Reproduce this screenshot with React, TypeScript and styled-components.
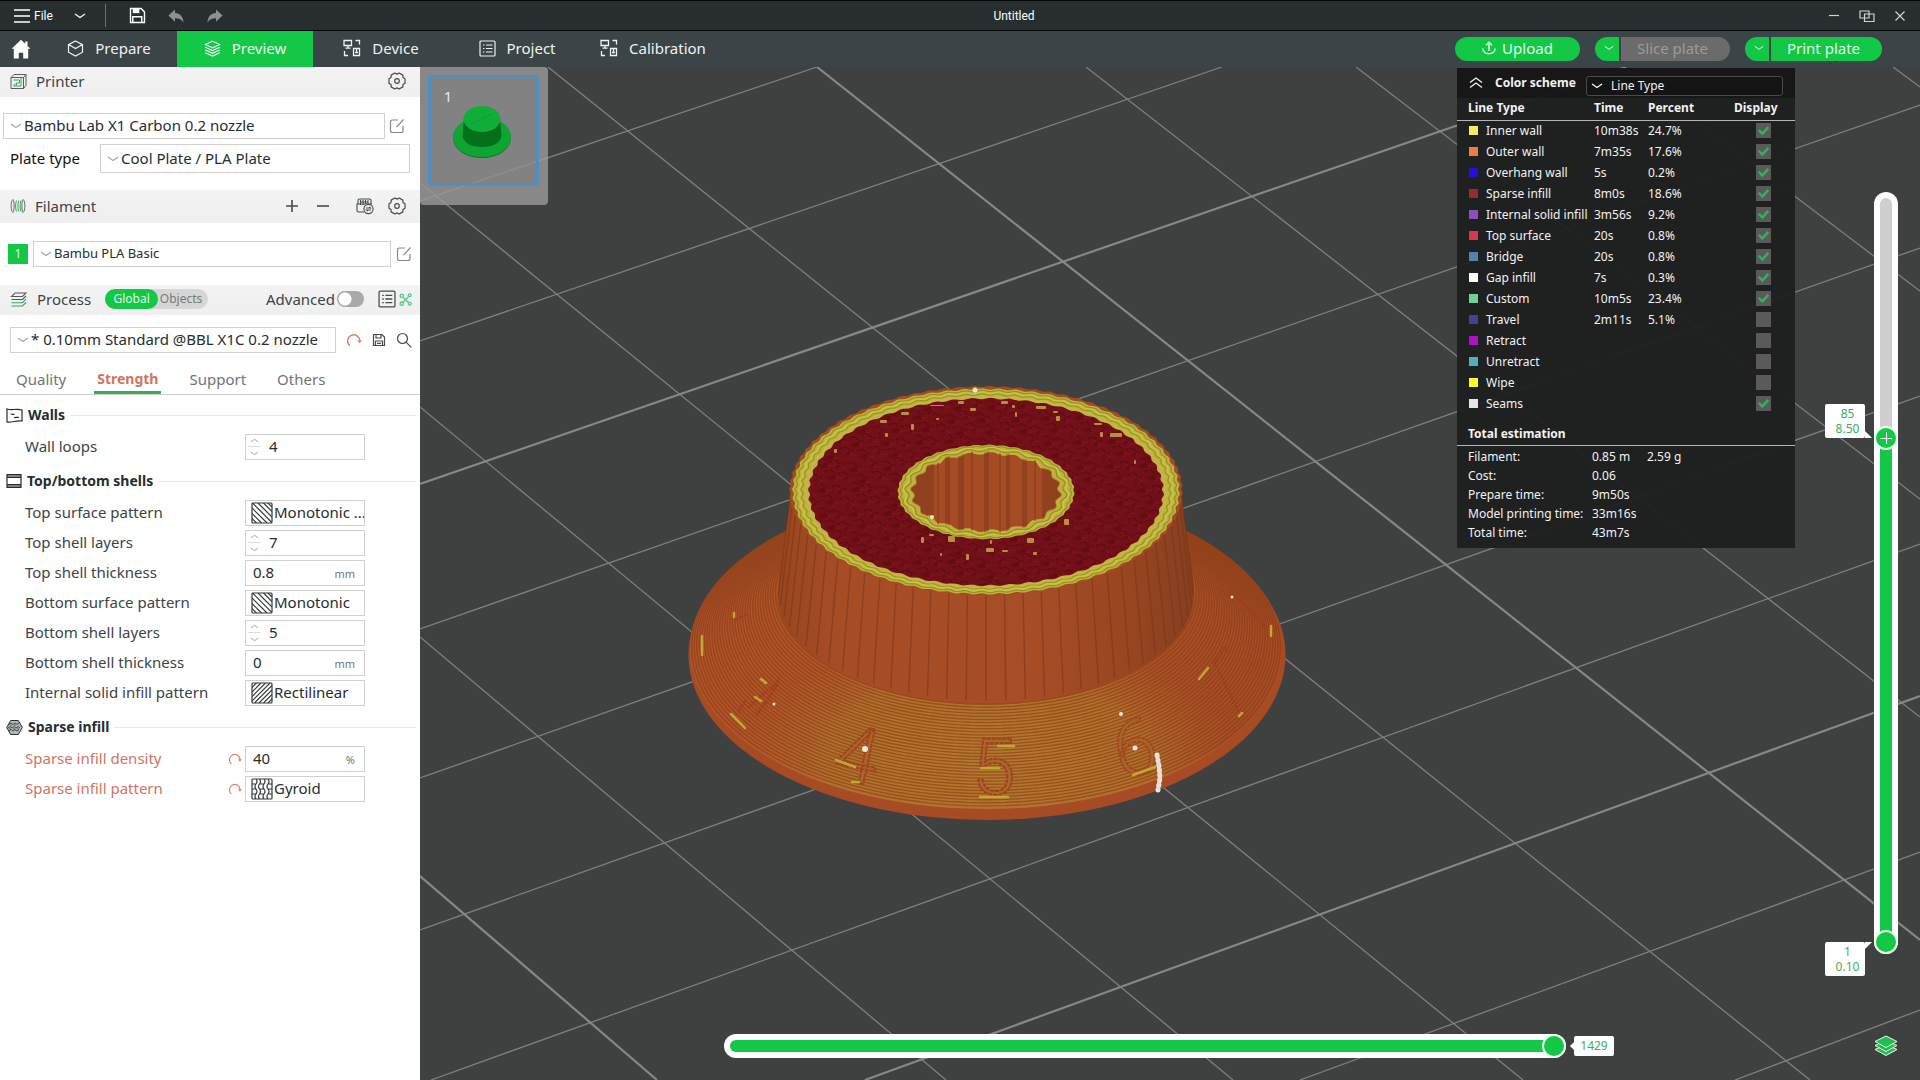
import React, { useId, useState } from "react";
import styled, { createGlobalStyle, css } from "styled-components";

const GREEN = "#12c846";
const INK = "#262e30";
const MODIFIED = "#cf7560";
const BORDER = "#d0d0d0";

const GlobalStyle = createGlobalStyle`
  *, *::before, *::after { box-sizing: border-box; }
  body { margin: 0; background: #3f4140; }
  body, button, input, select { font-family: "Noto Sans", "Open Sans", sans-serif; }
  button { border: 0; padding: 0; background: none; color: inherit; cursor: pointer; }
`;

/* ---------- icons ---------- */

const Svg = styled.svg.attrs<{ $s?: number }>((p) => ({
  fill: p.fill ?? "none",
  stroke: p.stroke ?? "currentColor",
  strokeWidth: p.strokeWidth ?? 1.2,
}))<{ $s?: number }>`
  width: ${(p) => p.$s ?? 16}px;
  height: ${(p) => p.$s ?? 16}px;
  flex: none;
  display: block;
`;

type IconProps = { s?: number };

const Chevron = ({ s = 12 }: IconProps) => (
  <Svg $s={s} viewBox="0 0 12 12"><path d="M1 4l5 3.600L11 4" /></Svg>
);
const MenuIcon = () => (
  <Svg $s={16} viewBox="0 0 16 16" strokeWidth="1.600"><path d="M0 2h16M0 8h16M0 14h16" /></Svg>
);
const SaveWhite = () => (
  <Svg $s={17} viewBox="0 0 18 18" strokeWidth="1.500">
    <path d="M1.600 1.600h11.200l3.600 3.600v11.200H1.600z" />
    <path d="M4 16.400v-6h9.500v6" />
    <path d="M4 2h7v4.500H4z" fill="currentColor" stroke="none" />
  </Svg>
);
const Undo = ({ flip }: { flip?: boolean }) => (
  <Svg $s={16} viewBox="0 0 16 16">
    <path
      d="M7 1.500v3.600c5 .3 8 3.300 8.600 9.400C13.500 11.500 11 10.200 7 10.200v3.600L.4 7.600z"
      fill="currentColor"
      stroke="none"
      transform={flip ? "matrix(-1 0 0 1 16 0)" : undefined}
    />
  </Svg>
);
const Minimize = () => (<Svg $s={12} viewBox="0 0 12 12"><path d="M1 5.500h10" /></Svg>);
const Restore = () => (
  <Svg $s={16} viewBox="0 0 16 16"><path d="M1 3h9v7H1zM5.500 6H15v7.500H5.500z" /></Svg>
);
const Close = () => (<Svg $s={12} viewBox="0 0 12 12"><path d="M1.500 1.500l9 9M10.500 1.500l-9 9" /></Svg>);
const Home = () => (
  <Svg $s={20} viewBox="0 0 20 20">
    <path d="M10 .8L.6 9.800h2.200V19.400h5v-5.600h4.400v5.600h5V9.800h2.200l-2.900-2.800V2.500h-2.300v2.300z" fill="currentColor" stroke="none" />
  </Svg>
);
const Cube = () => (
  <Svg $s={17} viewBox="0 0 17 17"><path d="M8.500 1l7 3.600v7.600l-7 3.900-7-3.900V4.600zM1.500 4.600l7 4 7-4" /></Svg>
);
const Layers = () => (
  <Svg $s={17} viewBox="0 0 17 17">
    <path d="M8.500 1.200l7.300 3.300-7.300 3.300L1.200 4.500zM1.200 7.300l7.300 3.300 7.300-3.300M1.200 10l7.300 3.300L15.800 10M1.200 12.700l7.300 3.300 7.300-3.300" />
  </Svg>
);
const DeviceIcon = () => (
  <Svg $s={18} viewBox="0 0 18 18" strokeWidth="1.300">
    <path d="M1 1.500h7.500v5H1zM5 6.500V9M2.500 9.200h5M12.500 1.500h4v4M1.500 12v4.500H5M10.500 9.500h6v7h-6zM13.500 10v3M12 13.500h3" />
  </Svg>
);
const ListIcon = ({ s = 17 }: IconProps) => (
  <Svg $s={s} viewBox="0 0 17 17">
    <rect x="1" y="1" width="15" height="15" rx="1" />
    <path d="M4 5h1.500M7 5h6.500M4 8.500h1.500M7 8.500h6.500M4 12h1.500M7 12h6.500" />
  </Svg>
);
const UploadIcon = () => (
  <Svg $s={14} viewBox="0 0 14 14" strokeWidth="1.500"><path d="M7 10V1.500M4 4.300l3-3 3 3M1 7.500c0 7 12 7 12 0" /></Svg>
);
const PrinterIcon = () => (
  <Svg $s={17} viewBox="0 0 17 17" strokeWidth="1">
    <path d="M1 4.500L4 1.500h12v11l-2.500 3H1zM1 4.500h12.500M13.500 4.500V15.500M13.500 4.500L16 1.500" stroke="#555d5f" />
    <path d="M3.500 7h6v3h-3v2.500M3.500 13h7.500M11 4.500V13M3.500 13l2-2.500" stroke="#3aa657" />
  </Svg>
);
const gearOutline = Array.from({ length: 6 }, (_, i) =>
  [[-15, 8.3], [15, 8.3], [30, 6.9]].map(([deg, r]) => {
    const a = ((i * 60 + deg) * Math.PI) / 180;
    return `${(9 + r * Math.cos(a)).toFixed(2)} ${(9 + r * Math.sin(a)).toFixed(2)}`;
  }).join("L"),
).join("L");
const Gear = () => (
  <Svg $s={18} viewBox="0 0 18 18" strokeWidth="1.200" strokeLinejoin="round">
    <path d={`M${gearOutline}Z`} />
    <circle cx="9" cy="9" r="2.300" />
  </Svg>
);
const Edit = () => (
  <Svg $s={16} viewBox="0 0 16 16"><path d="M9 2H3.500Q1.500 2 1.500 4v8.500q0 2 2 2H12q2 0 2-2V8M7.500 9.200L14.500 1.500" /></Svg>
);
const Spool = () => (
  <Svg $s={16} viewBox="0 0 16 16" strokeWidth="1">
    <path d="M3 1.500C.5 3 .5 13 3 14.500 4.500 13 4.500 3 3 1.500zM13 1.500c2.500 1.500 2.500 11.500 0 13-1.500-1.500-1.500-11.500 0-13z" stroke="#666e70" />
    <path d="M6.500 2.500c-1.200 3-1.200 8 0 11M8.800 2.500c-1.200 3-1.200 8 0 11M11 2.500c-1.200 3-1.200 8 0 11" stroke="#3aa657" />
  </Svg>
);
const Plus = () => (<Svg $s={14} viewBox="0 0 14 14" strokeWidth="1.600"><path d="M1 7h12M7 1v12" /></Svg>);
const Minus = () => (<Svg $s={14} viewBox="0 0 14 14" strokeWidth="1.600"><path d="M1 7h12" /></Svg>);
const Ams = () => (
  <Svg $s={18} viewBox="0 0 18 18" strokeWidth="1.100">
    <path d="M8 15H2.500Q1 15 1 13.500V7h15M2 7V3.500Q2 2 3.500 2h10Q15 2 15 3.500V7M4.500 3v5M7 3v5M9.500 3v4M12 3v4M4.500 5h8" />
    <circle cx="12.500" cy="12" r="4.600" />
    <path d="M10 11h4.500l-1.200-1.200M15 13h-4.500l1.200 1.200" />
  </Svg>
);
const ProcessIcon = () => (
  <Svg $s={17} viewBox="0 0 17 17" strokeWidth="1.100">
    <path d="M5 2h11l-3.500 3.500H1.500zM1.500 8.500h11L16 5" stroke="#555d5f" />
    <path d="M1.500 11.700h11L16 8.200M1.500 15h11L16 11.500" stroke="#3aa657" />
  </Svg>
);
const Tree = () => (
  <Svg $s={13} viewBox="0 0 14 14" stroke="#5cc785" strokeWidth="1.400">
    <circle cx="3" cy="3" r="1.800" /><circle cx="11.500" cy="2.500" r="1.500" /><circle cx="3" cy="11.500" r="1.800" /><circle cx="11.500" cy="11.500" r="1.500" />
    <path d="M4.500 4.500l5.700 5.700M10.300 3.700L4.500 10" />
  </Svg>
);
const Reset = ({ s = 14 }: IconProps) => (
  <Svg $s={s} viewBox="0 0 14 14" stroke="#e0806c">
    <path d="M3.500 12A5.300 5.300 0 1 1 12 8" />
    <path d="M9.800 7.500l2.200 2.300 1.900-2.600z" fill="#e0806c" stroke="none" />
  </Svg>
);
const SaveDark = () => (
  <Svg $s={14} viewBox="0 0 14 14"><path d="M1.500 1.500H10L12.500 4v8.500h-11zM4 1.500v3.500h5V1.500M3.500 12.500V8h7v4.500M5 10.300h4" /></Svg>
);
const Search = () => (
  <Svg $s={16} viewBox="0 0 16 16"><circle cx="6.500" cy="6.500" r="5" /><path d="M10.300 10.300l5 5" /></Svg>
);
const WallsIcon = () => (
  <Svg $s={17} viewBox="0 0 17 17"><path d="M1 2c5 2 9-1 15 1v11c-6-1-10 2-15 1zM4.500 7c2 0 2 .8 4 .3M8 10.500c2 .4 3-.6 5 0" /></Svg>
);
const ShellsIcon = () => (
  <Svg $s={16} viewBox="0 0 16 16"><path d="M1 1.500h14v13H1zM1 4.500h14M1 11.500h14" /><path d="M1 1.500h14v2.500H1zM1 12h14v2.500H1z" fill="currentColor" opacity=".6" stroke="none" /></Svg>
);
const InfillIcon = () => (
  <Svg $s={17} viewBox="0 0 17 17" strokeWidth="1">
    <path d="M4.700 1.500h7.600l4 7-4 7H4.700l-4-7z" fill="#b4b7b8" />
    <path d="M3 5.500l2-1.500 2 1.500L9 4l2 1.500L13 4M2 9l2-1.500L6 9l2-1.500L10 9l2-1.500L14 9M3 12l2-1.500L7 12l2-1.500 2 1.500 2-1.500M5 5.500V7M9 5.500V7M12 9v1.500M8 9v1.500M4 9v1.500" strokeWidth=".8" />
  </Svg>
);
const Pattern = ({ kind }: { kind: string }) => {
  const id = useId();
  const lines: Record<string, string> = {
    monotonic: "M1 6l15 15M1 11.500L10.500 21M1 16.500L5.500 21M1.500 1L21 20.500M7 1l14 14M12.500 1L21 9.500M17 1l4 4",
    rectilinear: "M1 5.500L5.500 1M1 10L10 1M1 14.500L14.500 1M1 19L19 1M3.500 21L21 3.500M8 21L21 8M12.500 21l8.500-8.500M17 21l4-4",
    gyroid: "M5 1q2 2.500 0 5t0 5 0 5 0 5M8.500 1q2 2.500 0 5t0 5 0 5 0 5M13 1q2 2.500 0 5t0 5 0 5 0 5M17 1q2 2.500 0 5t0 5 0 5 0 5M1 6h4M8.500 6H13M17 6h4M1 11h4M8.500 11H13M17 11h4M1 16h4M8.500 16H13M17 16h4",
  };
  return (
    <Svg $s={22} viewBox="0 0 22 22">
      <clipPath id={id}><rect x="1" y="1" width="20" height="20" /></clipPath>
      <path d={lines[kind]} clipPath={`url(#${id})`} />
      <rect x="1" y="1" width="20" height="20" rx="1" />
    </Svg>
  );
};

/* ---------- window chrome ---------- */

const Page = styled.div`
  display: flex;
  flex-direction: column;
  min-height: 100vh;
  color: ${INK};
  font-size: 15px;
  line-height: 20px;
`;

const TitleBar = styled.header`
  display: flex;
  align-items: center;
  height: 31px;
  background: #262e30;
  border: solid #050606;
  border-width: 1px 0;
  color: #fff;
  font: 12px/16px Roboto, "Noto Sans", sans-serif;
`;
const TitleTools = styled.div`
  display: flex;
  align-items: center;
  width: 235px;
  padding-left: 14px;
`;
const FileButton = styled.button`
  display: flex;
  align-items: center;
  gap: 4px;
  width: 60px;
  font: inherit;
`;
const ToolButton = styled.button<{ $dim?: boolean; $gap?: number }>`
  display: flex;
  margin-right: ${(p) => p.$gap ?? 0}px;
  color: ${(p) => (p.$dim ? "#8b9091" : "inherit")};
`;
const Divider = styled.span`
  width: 1px;
  height: 23px;
  margin-right: 23px;
  background: #6c7274;
`;
const WindowTitle = styled.div`
  flex: 1;
  text-align: center;
`;
const WindowButtons = styled.div`
  display: flex;
  align-items: center;
  justify-content: space-between;
  width: 127px;
  padding: 0 14px 0 35px;
  color: #cfd3d4;
`;

const NavBar = styled.nav`
  display: flex;
  align-items: center;
  height: 36px;
  padding-right: 38px;
  background: #3b4446;
  color: #fff;
`;
const HomeButton = styled.button`
  display: flex;
  justify-content: center;
  width: 41px;
`;
const NavTab = styled.button<{ $active?: boolean }>`
  display: flex;
  align-items: center;
  justify-content: center;
  gap: 11px;
  width: 136px;
  height: 36px;
  padding-bottom: 2px;
  font-size: 15px;
  color: #eff2f2;
  background: ${(p) => (p.$active ? GREEN : "transparent")};
`;
const Actions = styled.div`
  display: flex;
  gap: 15px;
  margin-left: auto;
`;
const Split = styled.div`
  display: flex;
  gap: 2px;
`;
const Action = styled.button<{ $part?: "menu" | "main"; $w: number }>`
  display: flex;
  align-items: center;
  justify-content: center;
  gap: 6px;
  width: ${(p) => p.$w}px;
  height: 24px;
  padding: 0 ${(p) => (p.$part === "main" ? 6 : 0)}px 2px ${(p) => (p.$part === "menu" ? 3 : 0)}px;
  font-size: 15px;
  color: #e4fbea;
  background: ${GREEN};
  border-radius: ${(p) => (p.$part === "menu" ? "12px 0 0 12px" : p.$part === "main" ? "0 12px 12px 0" : "12px")};
  &:disabled { background: #6b6b6b; color: #9b9b9b; cursor: default; }
`;

const Body = styled.div`
  display: flex;
  flex: 1;
`;

/* ---------- side panel ---------- */

const Sidebar = styled.aside`
  display: flex;
  flex-direction: column;
  width: 420px;
  flex: none;
  background: #fff;
`;
const PanelHeader = styled.header<{ $h?: number; $right?: number }>`
  display: flex;
  align-items: center;
  height: ${(p) => p.$h ?? 30}px;
  padding: 0 ${(p) => p.$right ?? 14}px 2px 10px;
  background: linear-gradient(#f3f3f3, #efefef);
  color: #3c4446;
`;
const PanelTitle = styled.h2`
  margin: 0 auto 0 9px;
  font-size: 15px;
  font-weight: 400;
  line-height: 20px;
`;
const IconGroup = styled.div<{ $gap: number; $left?: number }>`
  display: flex;
  align-items: center;
  gap: ${(p) => p.$gap}px;
  margin-left: ${(p) => p.$left ?? 0}px;
`;
const IconButton = styled.button<{ $muted?: boolean }>`
  display: flex;
  color: ${(p) => (p.$muted ? "#84898a" : "#454d4f")};
`;
const FieldRow = styled.div<{ $pad: string; $gap?: number }>`
  display: flex;
  align-items: center;
  gap: ${(p) => p.$gap ?? 5}px;
  padding: ${(p) => p.$pad};
`;
const FieldLabel = styled.label`
  flex: 1;
  padding-bottom: 2px;
  color: #111;
`;
const SelectBox = styled.span<{ $w?: number; $h?: number; $pad?: number }>`
  display: grid;
  align-items: center;
  flex: ${(p) => (p.$w ? "none" : 1)};
  width: ${(p) => (p.$w ? `${p.$w}px` : "auto")};
  height: ${(p) => p.$h ?? 26}px;
  border: 1px solid ${BORDER};
  color: #a4a8a9;
  > * { grid-area: 1 / 1; }
  > svg { margin-left: ${(p) => p.$pad ?? 6}px; pointer-events: none; }
`;
const Select = styled.select<{ $size?: number; $pad?: number; $color?: string }>`
  appearance: none;
  width: 100%;
  height: 100%;
  padding: 0 0 2px ${(p) => p.$pad ?? 20}px;
  border: 0;
  background: none;
  color: ${(p) => p.$color ?? INK};
  font-size: ${(p) => p.$size ?? 15}px;
`;
const Slot = styled.button`
  width: 20px;
  height: 20px;
  background: ${GREEN};
  color: #e4fbea;
  font-size: 12px;
  line-height: 20px;
`;
const Pill = styled.div`
  display: flex;
  margin: 0 auto 0 14px;
  border-radius: 10px;
  background: #d6d6d6;
`;
const PillButton = styled.button<{ $on?: boolean }>`
  width: ${(p) => (p.$on ? 53 : 50)}px;
  height: 20px;
  padding: 0 ${(p) => (p.$on ? 0 : 4)}px 1px 0;
  border-radius: 10px;
  font-size: 12px;
  line-height: 19px;
  color: ${(p) => (p.$on ? "#dffbe6" : "#757a7b")};
  background: ${(p) => (p.$on ? GREEN : "transparent")};
`;
const SwitchLabel = styled.label`
  display: flex;
  align-items: center;
  gap: 2px;
  margin-right: 14px;
`;
const Switch = styled.input`
  appearance: none;
  width: 27px;
  height: 16px;
  margin: 0;
  border-radius: 8px;
  background: radial-gradient(circle at 8px 8px, #fff 6px, #a9a9a9 7px);
  &:checked { background: radial-gradient(circle at 19px 8px, #fff 6px, ${GREEN} 7px); }
`;
const SettingTabs = styled.div`
  display: flex;
  gap: 25px;
  height: 31px;
  margin-top: 11px;
  padding-left: 13px;
  border-bottom: 1px solid #cfcfcf;
`;
const SettingTab = styled.button<{ $on?: boolean }>`
  height: 30px;
  padding: 2px 3px 0;
  font-size: ${(p) => (p.$on ? 14 : 15)}px;
  font-weight: ${(p) => (p.$on ? 700 : 400)};
  color: ${(p) => (p.$on ? MODIFIED : "#6f7576")};
  border-bottom: 3px solid ${(p) => (p.$on ? "#3bab56" : "transparent")};
`;
const Settings = styled.div`
  padding-top: 1px;
`;
const Section = styled.section`
  padding-top: 2px;
`;
const SectionHead = styled.h3`
  display: flex;
  align-items: center;
  gap: 5px;
  height: 34px;
  margin: 0;
  padding: 0 4px 0 6px;
  font-size: 14px;
  font-weight: 700;
  &::after { content: ""; flex: 1; height: 1px; background: #eaeaea; }
`;
const SettingRow = styled.div<{ $modified?: boolean }>`
  display: flex;
  align-items: center;
  height: 30px;
  padding: 0 55px 0 25px;
  color: ${(p) => (p.$modified ? MODIFIED : "#3c4446")};
`;
const SettingLabel = styled.label`
  flex: 1;
  padding-bottom: 2px;
`;
const ResetButton = styled.button`
  margin-right: 3px;
`;
const ValueBox = styled.div<{ $pad?: number }>`
  display: flex;
  align-items: center;
  width: 120px;
  height: 26px;
  padding: 0 9px 0 ${(p) => p.$pad ?? 7}px;
  border: 1px solid ${BORDER};
  color: ${INK};
`;
const ValueInput = styled.input`
  flex: 1;
  min-width: 0;
  padding: 0 0 2px;
  border: 0;
  outline: 0;
  background: none;
  color: inherit;
  font-size: 15px;
`;
const Unit = styled.span`
  padding-top: 2px;
  color: #70767a;
  font-size: 11px;
`;
const Spinner = styled.span`
  display: flex;
  flex-direction: column;
  margin-right: 8px;
  color: #9a9e9f;
`;
const SpinButton = styled.button<{ $up?: boolean }>`
  display: flex;
  width: 13px;
  height: 12px;
  align-items: center;
  justify-content: center;
  ${(p) => p.$up && css`border-bottom: 1px solid #dedede; svg { transform: scaleY(-1); }`}
`;

type Option = { label: string; value: string; kind: "spin" | "mm" | "%" | "monotonic" | "rectilinear" | "gyroid"; modified?: boolean };
const sections: { title: string; icon: React.ReactNode; rows: Option[] }[] = [
  { title: "Walls", icon: <WallsIcon />, rows: [{ label: "Wall loops", value: "4", kind: "spin" }] },
  {
    title: "Top/bottom shells",
    icon: <ShellsIcon />,
    rows: [
      { label: "Top surface pattern", value: "Monotonic ...", kind: "monotonic" },
      { label: "Top shell layers", value: "7", kind: "spin" },
      { label: "Top shell thickness", value: "0.8", kind: "mm" },
      { label: "Bottom surface pattern", value: "Monotonic", kind: "monotonic" },
      { label: "Bottom shell layers", value: "5", kind: "spin" },
      { label: "Bottom shell thickness", value: "0", kind: "mm" },
      { label: "Internal solid infill pattern", value: "Rectilinear", kind: "rectilinear" },
    ],
  },
  {
    title: "Sparse infill",
    icon: <InfillIcon />,
    rows: [
      { label: "Sparse infill density", value: "40", kind: "%", modified: true },
      { label: "Sparse infill pattern", value: "Gyroid", kind: "gyroid", modified: true },
    ],
  },
];

const ValueSelect = styled(SelectBox)`
  color: #33393b;
`;
const Setting = ({ label, value, kind, modified }: Option) => {
  const id = useId();
  const [text, setText] = useState(value);
  const step = (d: number) => setText(String(Math.max(0, Number(text) + d)));
  return (
    <SettingRow $modified={modified}>
      <SettingLabel htmlFor={id}>{label}</SettingLabel>
      {modified && <ResetButton aria-label={`Reset ${label}`}><Reset /></ResetButton>}
      {kind === "spin" || kind === "mm" || kind === "%" ? (
        <ValueBox $pad={kind === "spin" ? 2 : 7}>
          {kind === "spin" && (
            <Spinner>
              <SpinButton $up aria-label="Increase" onClick={() => step(1)}><Chevron s={9} /></SpinButton>
              <SpinButton aria-label="Decrease" onClick={() => step(-1)}><Chevron s={9} /></SpinButton>
            </Spinner>
          )}
          <ValueInput id={id} value={text} onChange={(e) => setText(e.target.value)} />
          {kind !== "spin" && <Unit>{kind}</Unit>}
        </ValueBox>
      ) : (
        <ValueSelect $w={120} $pad={5}>
          <Pattern kind={kind} />
          <Select id={id} $pad={28}><option>{value}</option></Select>
        </ValueSelect>
      )}
    </SettingRow>
  );
};

const Side = () => (
  <Sidebar>
    <PanelHeader>
      <PrinterIcon />
      <PanelTitle>Printer</PanelTitle>
      <IconButton aria-label="Printer settings"><Gear /></IconButton>
    </PanelHeader>
    <FieldRow $pad="16px 15px 5px 3px" $gap={4}>
      <SelectBox><Chevron /><Select aria-label="Printer preset"><option>Bambu Lab X1 Carbon 0.2 nozzle</option></Select></SelectBox>
      <IconButton $muted aria-label="Edit printer"><Edit /></IconButton>
    </FieldRow>
    <FieldRow $pad="0 10px 17px">
      <FieldLabel htmlFor="plate">Plate type</FieldLabel>
      <SelectBox $w={310} $h={29}><Chevron /><Select id="plate"><option>Cool Plate / PLA Plate</option></Select></SelectBox>
    </FieldRow>
    <PanelHeader $h={33}>
      <Spool />
      <PanelTitle>Filament</PanelTitle>
      <IconGroup $gap={17}>
        <IconButton aria-label="Add filament"><Plus /></IconButton>
        <IconButton aria-label="Remove filament"><Minus /></IconButton>
        <IconGroup $gap={14} $left={9}>
          <IconButton aria-label="Sync filaments"><Ams /></IconButton>
          <IconButton aria-label="Filament settings"><Gear /></IconButton>
        </IconGroup>
      </IconGroup>
    </PanelHeader>
    <FieldRow $pad="18px 8px 18px">
      <Slot>1</Slot>
      <SelectBox><Chevron /><Select $size={13} aria-label="Filament preset"><option>Bambu PLA Basic</option></Select></SelectBox>
      <IconButton $muted aria-label="Edit filament"><Edit /></IconButton>
    </FieldRow>
    <PanelHeader $right={8}>
      <ProcessIcon />
      <ProcessTitle>Process</ProcessTitle>
      <Pill>
        <PillButton $on>Global</PillButton>
        <PillButton>Objects</PillButton>
      </Pill>
      <SwitchLabel>Advanced<Switch type="checkbox" /></SwitchLabel>
      <IconGroup $gap={3}>
        <IconButton aria-label="List view"><ListIcon s={18} /></IconButton>
        <IconButton aria-label="Compare presets"><Tree /></IconButton>
      </IconGroup>
    </PanelHeader>
    <FieldRow $pad="12px 10px 0" $gap={10}>
      <SelectBox $w={326}><Chevron /><Select aria-label="Process preset"><option>* 0.10mm Standard @BBL X1C 0.2 nozzle</option></Select></SelectBox>
      <IconButton aria-label="Reset preset"><Reset s={16} /></IconButton>
      <IconButton aria-label="Save preset"><SaveDark /></IconButton>
      <IconButton aria-label="Search settings"><Search /></IconButton>
    </FieldRow>
    <SettingTabs>
      <SettingTab>Quality</SettingTab>
      <SettingTab $on>Strength</SettingTab>
      <SettingTab>Support</SettingTab>
      <SettingTab>Others</SettingTab>
    </SettingTabs>
    <Settings>
      {sections.map((s) => (
        <Section key={s.title}>
          <SectionHead>{s.icon}{s.title}</SectionHead>
          {s.rows.map((r) => <Setting key={r.label} {...r} />)}
        </Section>
      ))}
    </Settings>
  </Sidebar>
);
const ProcessTitle = styled(PanelTitle)`
  margin: 0 0 0 10px;
`;

/* ---------- 3D scene ---------- */

type Line = [number, number, number, number];
const thinGrid: Line[] = [
  [420, 201, 817, 67], [420, 341, 1222, 67], [420, 629, 1920, 105], [420, 778, 1920, 248],
  [420, 930, 1920, 396], [431, 1080, 1920, 544], [1300, 1080, 1920, 852], [1735, 1080, 1920, 1010],
  [420, 183, 1523, 1080], [420, 407, 1233, 1080], [420, 637, 946, 1080], [548, 67, 1810, 1080],
  [1086, 67, 1920, 717], [1356, 67, 1920, 499], [1624, 67, 1920, 291], [1893, 67, 1920, 87],
];
const thickGrid: Line[] = [
  [420, 484, 1626, 67], [865, 1080, 1920, 696], [817, 67, 1920, 940], [420, 876, 657, 1080],
];

const CX = 986;
const ring = (cy: number, rx: number, ry: number, waves = 0, amp = 0) => {
  const pts: string[] = [];
  const n = waves ? waves * 8 : 96;
  for (let i = 0; i < n; i++) {
    const t = (i / n) * Math.PI * 2;
    const w = amp * Math.sin(t * waves);
    pts.push(`${(CX + (rx + w) * Math.cos(t)).toFixed(1)} ${(cy + (ry + w * 0.7) * Math.sin(t)).toFixed(1)}`);
  }
  return `M${pts.join("L")}Z`;
};

const flareRings = Array.from({ length: 34 }, (_, i) => {
  const k = (i + 1) / 35;
  return ring(591 + 58 * k, 208 + 89 * k, 110 + 50 * k);
});

const ribs = Array.from({ length: 33 }, (_, i) => {
  const t = Math.PI * ((i + 0.5) / 33);
  return `M${(CX + 196 * Math.cos(t)).toFixed(1)} ${(491 + 104 * Math.sin(t)).toFixed(1)}L${(CX + 208 * Math.cos(t)).toFixed(1)} ${(591 + 110 * Math.sin(t)).toFixed(1)}`;
}).join("");

const cells: string[] = [];
const pits: Line[] = [];
for (let row = 0; row < 17; row++) {
  for (let col = 0; col < 24; col++) {
    const x = 806 + col * 16 + (row % 2) * 8 + ((row * 7 + col * 5) % 4);
    const y = 400 + row * 12 + ((row * 3 + col * 7) % 5);
    cells.push(`M${x} ${y}q5 -4 8 0t-2 6M${x + 8} ${y + 2}h6`);
    if ((row + col) % 2) pits.push([x + 2, y + 2, 9, 6]);
  }
}

const flecks: Line[] = [
  [970, 408, 6, 3], [901, 412, 8, 3], [930, 405, 14, 1], [911, 424, 3, 6], [880, 420, 7, 3], [885, 433, 3, 4],
  [1001, 401, 7, 3], [1012, 405, 3, 3], [1015, 412, 2, 5], [1036, 406, 10, 3], [1053, 411, 5, 2], [1056, 416, 4, 5],
  [1094, 423, 8, 2], [1100, 432, 3, 5], [1110, 433, 12, 4], [1134, 460, 2, 4], [834, 449, 3, 4], [1064, 519, 5, 6],
  [921, 537, 3, 6], [929, 534, 5, 2], [948, 536, 7, 6], [986, 548, 8, 4], [1002, 550, 6, 2], [966, 554, 3, 6],
  [1027, 538, 7, 5], [1033, 552, 4, 3], [990, 540, 2, 4], [940, 553, 2, 3], [958, 401, 6, 3], [936, 418, 3, 2],
];

const SceneSvg = styled.svg`
  position: absolute;
  inset: 0;
  width: 100%;
  height: 100%;
`;
const ModelDigit = styled.text`
  font: 300 78px Roboto, sans-serif;
  fill: #a8682c;
  stroke: #a2421d;
  stroke-width: 2px;
  stroke-dasharray: 4 1;
`;

const Scene = () => (
  <SceneSvg viewBox="420 67 1500 1013" preserveAspectRatio="xMidYMid slice" aria-label="Sliced model on the build plate">
    <defs>
      <linearGradient id="body" x1="0" x2="1">
        <stop offset="0" stopColor="#98461f" /><stop offset=".15" stopColor="#a64d26" />
        <stop offset=".6" stopColor="#a84e27" /><stop offset=".85" stopColor="#974521" /><stop offset="1" stopColor="#85401f" />
      </linearGradient>
      <linearGradient id="flare" x1="0" x2="1" y1="0" y2=".1">
        <stop offset="0" stopColor="#b25329" /><stop offset=".5" stopColor="#b25627" /><stop offset="1" stopColor="#a84d25" />
      </linearGradient>
      <radialGradient id="gold" gradientUnits="userSpaceOnUse" cx="0" cy="0" r="1" gradientTransform="translate(986 760) scale(250 130)">
        <stop offset="0" stopColor="#b47a2e" /><stop offset=".65" stopColor="#b2722b" stopOpacity=".9" /><stop offset="1" stopColor="#b0602a" stopOpacity="0" />
      </radialGradient>
      <clipPath id="hole"><path d={ring(492, 74, 40, 20, 2)} /></clipPath>
      <clipPath id="infill"><path d={ring(492, 176, 93)} /></clipPath>
    </defs>
    <rect x="420" y="67" width="1500" height="1013" fill="#3f4140" />
    <g stroke="#7e8080">
      {thinGrid.map(([a, b, c, d], i) => <line key={i} x1={a} y1={b} x2={c} y2={d} strokeWidth="1.300" />)}
      {thickGrid.map(([a, b, c, d], i) => <line key={i} x1={a} y1={b} x2={c} y2={d} strokeWidth="2.200" stroke="#868888" />)}
    </g>
    <ellipse cx="987" cy="655" rx="298.500" ry="165" fill="#a64b23" />
    <ellipse cx="986" cy="649" rx="296" ry="160" fill="url(#flare)" />
    <ellipse cx="986" cy="649" rx="296" ry="160" fill="url(#gold)" />
    <g fill="none" stroke="#843c18" strokeWidth="1.400" opacity=".6">
      {flareRings.map((d, i) => <path key={i} d={d} />)}
    </g>
    <path d="M790.500 491C789 530 778 560 778 596A208 108 0 0 0 1194 596C1194 560 1183 530 1181.500 491z" fill="url(#body)" />
    <path d={ribs} stroke="#7b3416" strokeWidth="1.400" opacity=".55" />
    <path d="M778 596A208 108 0 0 0 1194 596" stroke="#9a4a1e" strokeWidth="1.500" fill="none" />

    <path d={ring(491, 196, 104.5, 80, 0.8)} fill="#a24c1f" />
    <path d={ring(491.5, 193, 102.5, 70, 0.9)} fill="#c0b040" />
    <g fill="none">
      <path d={ring(491.5, 190, 100.5, 70, 1)} stroke="#8f961f" strokeWidth="1.200" />
      <path d={ring(491.5, 186.5, 98.5, 70, 1)} stroke="#ccbf48" strokeWidth="2" />
      <path d={ring(491.5, 184, 97, 70, 1)} stroke="#969a22" strokeWidth="1.300" />
      <path d={ring(492, 180, 95, 70, 1)} stroke="#c6b548" strokeWidth="2" />
    </g>
    <path d={ring(492, 177, 93.5, 60, 1)} fill="#72111a" />
    <g clipPath="url(#infill)">
      <g fill="#5f0b12" opacity=".55">
        {pits.map(([x, y, w, h], i) => <rect key={i} x={x} y={y} width={w} height={h} rx="3" />)}
      </g>
      <path d={cells.join("")} fill="none" stroke="#5f0b12" strokeWidth="1.200" />
      <path d={cells.join("")} fill="none" stroke="#861820" strokeWidth=".7" transform="translate(3 4)" />
    </g>
    <g fill="#b98e3c">
      {flecks.map(([x, y, w, h], i) => <rect key={i} x={x} y={y} width={w} height={h} rx="1" />)}
    </g>
    <path d={ring(492, 88, 47, 40, 0.6)} fill="#c0b040" />
    <g fill="none">
      <path d={ring(492, 85, 45.5, 40, 0.8)} stroke="#8f961f" strokeWidth="1.200" />
      <path d={ring(492, 81.5, 43.5, 20, 1.6)} stroke="#d0c04a" strokeWidth="1.600" />
      <path d={ring(492, 79, 42, 20, 2)} stroke="#8f961f" strokeWidth="1.300" />
    </g>
    <path d={ring(492, 74, 39.5, 20, 2)} fill="#a54c25" stroke="#c6b03c" strokeWidth="1.500" />
    <g clipPath="url(#hole)">
      <path d="M900 440h34v100h-34zM945 440h5v100h-5zM958 440h6v100h-6zM984 440h5v100h-5zM1006 440h4v100h-4zM1022 440h5v100h-5zM1042 440h30v100h-30z" fill="#7c3518" opacity=".45" />
      <path d="M927 440v100M938 440v100M972 440v100M1000 440v100M1035 440v100" stroke="#8f411e" strokeWidth="1.500" />
    </g>

    <g fill="none" stroke="#a33a1a" strokeWidth="2" strokeDasharray="4 1">
      <path d="M1213 660l27 54M1225 647l3 6M1236 598l9 6M1246 606l20 22M1225 646l-10 16M1255 612l8 16" opacity=".7" />
      <path d="M748 708l20-18M756 716l22-32M738 712l8-12M770 690l10-12M735 620l12-6" opacity=".8" />
    </g>
    <ModelDigit x="836" y="782" transform="rotate(12 858 755)">4</ModelDigit>
    <ModelDigit x="972" y="794">5</ModelDigit>
    <ModelDigit x="1113" y="774" transform="rotate(-12 1138 745)" opacity=".8">6</ModelDigit>
    <g stroke="#c0a832" strokeWidth="2.500" strokeLinecap="round">
      <path d="M731 714l14 14M836 760l19 7M852 782h7M998 746h16M981 768h18M980 797h28M1133 775l22-8M1199 679l9-11M702 636v19M1271 626v10M1239 716l3-3M755 697l6 4M761 679l5 4M734 613v4" />
    </g>
    <g fill="#f2e3dc">
      <circle cx="865" cy="749" r="3" /><circle cx="1135" cy="748" r="2.500" /><circle cx="1121" cy="714" r="2" />
      <circle cx="975" cy="390" r="2.500" /><circle cx="932" cy="517" r="2" /><circle cx="774" cy="704" r="1.500" /><circle cx="1232" cy="597" r="1.500" />
    </g>
    <path d="M1157 755L1159 766L1160 778L1158 790" fill="none" stroke="#ece9e6" strokeWidth="5" strokeLinecap="round" strokeDasharray="1 4" />
    <path d="M1157 755L1159 766L1160 778L1158 790" fill="none" stroke="#e4dfdc" strokeWidth="3.500" />
  </SceneSvg>
);

/* ---------- viewport overlays ---------- */

const Viewport = styled.main`
  position: relative;
  flex: 1;
  overflow: hidden;
  min-height: 620px;
`;
const PlateList = styled.div`
  position: absolute;
  left: 0;
  top: 0;
  padding: 8px 9px 19px 8px;
  border-radius: 0 4px 4px 4px;
  background: rgba(156, 156, 156, 0.78);
`;
const Plate = styled.button`
  display: grid;
  width: 111px;
  height: 111px;
  border: 3px solid #4c8fc4;
  border-radius: 4px;
  background: rgba(110, 110, 110, 0.2);
  color: #ececec;
  > * { grid-area: 1 / 1; }
`;
const PlateNo = styled.span`
  justify-self: start;
  align-self: start;
  padding: 10px 0 0 13px;
  font-size: 14px;
  line-height: 18px;
`;
const PlateThumb = styled.svg`
  width: 105px;
  height: 105px;
`;

const Legend = styled.section`
  position: absolute;
  top: 1px;
  right: 125px;
  width: 338px;
  padding-bottom: 6px;
  background: rgba(30, 30, 30, 0.94);
  color: #f2f2f2;
  font-size: 12px;
  line-height: 16px;
`;
const LegendHead = styled.header`
  display: flex;
  align-items: center;
  height: 30px;
  padding: 0 12px;
  background: rgba(18, 18, 18, 0.6);
`;
const LegendTitle = styled.label`
  flex: 1;
  margin-left: 12px;
  font-weight: 700;
`;
const SchemeBox = styled(SelectBox)`
  margin-top: 5px;
  border-color: #4a4a4a;
  border-radius: 3px;
  background: #141414;
  color: #fff;
`;
const Table = styled.table`
  width: 100%;
  border-collapse: collapse;
  table-layout: fixed;
  th { text-align: left; font-weight: 700; }
`;
const LegendTable = styled(Table)`
  thead th { height: 22px; padding: 0 0 1px; border-bottom: 1px solid #b5b5b5; }
  thead th:first-child { padding-left: 11px; }
  td { height: 21px; padding: 0; white-space: nowrap; }
`;
const TotalsTable = styled(Table)`
  caption { height: 22px; padding: 1px 0 0 11px; border-bottom: 1px solid #b5b5b5; margin-top: 10px; text-align: left; font-weight: 700; line-height: 18px; }
  tbody::before { content: ""; display: block; height: 1px; }
  th { font-weight: 400; padding: 0 0 0 11px; white-space: nowrap; }
  td { padding: 0; white-space: nowrap; }
  tr { height: 19px; }
`;
const Col = styled.col<{ $w?: number }>`
  width: ${(p) => (p.$w ? `${p.$w}px` : "auto")};
`;
const NameCell = styled.label`
  display: flex;
  align-items: center;
  gap: 8px;
  padding-left: 12px;
`;
const Swatch = styled.span<{ $c: string }>`
  width: 9px;
  height: 9px;
  background: ${(p) => p.$c};
`;
const Check = styled.input`
  appearance: none;
  display: block;
  width: 15px;
  height: 15px;
  margin: 0 0 0 22px;
  background: #5a5a5a;
  &:checked::before {
    content: "";
    display: block;
    width: 15px;
    height: 15px;
    background: #2fb35c;
    clip-path: polygon(12% 50%, 24% 40%, 42% 58%, 76% 20%, 88% 32%, 43% 82%);
  }
`;

const lineTypes: [string, string, string, string, boolean][] = [
  ["Inner wall", "#fbe86b", "10m38s", "24.7%", true],
  ["Outer wall", "#ed7c45", "7m35s", "17.6%", true],
  ["Overhang wall", "#1f13d8", "5s", "0.2%", true],
  ["Sparse infill", "#992a2d", "8m0s", "18.6%", true],
  ["Internal solid infill", "#8b4fc0", "3m56s", "9.2%", true],
  ["Top surface", "#d6394b", "20s", "0.8%", true],
  ["Bridge", "#5282b4", "20s", "0.8%", true],
  ["Gap infill", "#ffffff", "7s", "0.3%", true],
  ["Custom", "#6bd596", "10m5s", "23.4%", true],
  ["Travel", "#3f4690", "2m11s", "5.1%", false],
  ["Retract", "#b010c4", "", "", false],
  ["Unretract", "#55aebd", "", "", false],
  ["Wipe", "#fbfb26", "", "", false],
  ["Seams", "#e6e6e6", "", "", true],
];
const totals: [string, string, string][] = [
  ["Filament:", "0.85 m", "2.59 g"],
  ["Cost:", "0.06", ""],
  ["Prepare time:", "9m50s", ""],
  ["Model printing time:", "33m16s", ""],
  ["Total time:", "43m7s", ""],
];

const LegendPanel = () => (
  <Legend>
    <LegendHead>
      <button aria-label="Collapse legend">
        <Svg $s={14} viewBox="0 0 14 14" strokeWidth="1.300"><path d="M1 6.500L7 2l6 4.500M1 11.500L7 7l6 4.500" /></Svg>
      </button>
      <LegendTitle htmlFor="scheme">Color scheme</LegendTitle>
      <SchemeBox $w={197} $h={20} $pad={4}>
        <Chevron />
        <Select id="scheme" $size={12} $pad={24} $color="#f2f2f2"><option>Line Type</option></Select>
      </SchemeBox>
    </LegendHead>
    <LegendTable>
      <colgroup><Col $w={137} /><Col $w={54} /><Col $w={86} /><Col /></colgroup>
      <thead><tr><th>Line Type</th><th>Time</th><th>Percent</th><th>Display</th></tr></thead>
      <tbody>
        {lineTypes.map(([name, color, time, pct, on]) => (
          <tr key={name}>
            <td><NameCell htmlFor={name}><Swatch $c={color} />{name}</NameCell></td>
            <td>{time}</td>
            <td>{pct}</td>
            <td><Check id={name} type="checkbox" defaultChecked={on} /></td>
          </tr>
        ))}
      </tbody>
    </LegendTable>
    <TotalsTable>
      <caption>Total estimation</caption>
      <colgroup><Col $w={135} /><Col $w={55} /><Col /></colgroup>
      <tbody>
        {totals.map(([k, a, b]) => <tr key={k}><th scope="row">{k}</th><td>{a}</td><td>{b}</td></tr>)}
      </tbody>
    </TotalsTable>
  </Legend>
);

const thumb = css`
  appearance: none;
  width: 24px;
  height: 24px;
  border: 2px solid #eafbef;
  border-radius: 50%;
  background: ${GREEN};
  pointer-events: auto;
`;
const Rail = styled.div<{ $vertical?: boolean }>`
  position: absolute;
  display: grid;
  border-radius: 12px;
  background: #fff;
  ${(p) => (p.$vertical ? "top: 125px; bottom: 126px; right: 22px; width: 24px;" : "left: 304px; right: 354px; bottom: 22px; height: 24px;")}
  > * { grid-area: 1 / 1; }
`;
const Fill = styled.span`
  margin: 6px;
  border-radius: 6px;
  background: ${GREEN};
`;
const Range = styled.input<{ $vertical?: boolean; $cross?: boolean }>`
  appearance: none;
  margin: 0;
  background: none;
  pointer-events: none;
  min-width: 0;
  min-height: 0;
  ${(p) => (p.$vertical ? "writing-mode: vertical-lr; direction: rtl; width: 24px; height: 100%;" : "width: 100%; height: 24px;")}
  &::-webkit-slider-thumb {
    ${thumb}
    ${(p) => p.$cross && css`
      background:
        linear-gradient(#fff, #fff) center / 12px 1px no-repeat,
        linear-gradient(#fff, #fff) center / 1px 12px no-repeat,
        ${GREEN};
    `}
  }
`;
const Tag = styled.output<{ $side: "up" | "down" | "left" }>`
  position: absolute;
  width: 40px;
  border-radius: 2px;
  background: #fff;
  color: #3cae5e;
  font-size: 12px;
  line-height: 15px;
  text-align: center;
  white-space: pre-line;
  &::after { content: ""; position: absolute; background: #fff; }
  ${(p) => p.$side === "up" && "right: 33px; padding: 2px 0 2px 5px; &::after { right: -7px; bottom: 0; width: 7px; height: 7px; clip-path: polygon(0 0, 100% 100%, 0 100%); }"}
  ${(p) => p.$side === "down" && "right: 33px; padding: 2px 0 2px 5px; &::after { right: -7px; top: 0; width: 7px; height: 7px; clip-path: polygon(0 0, 100% 0, 0 100%); }"}
  ${(p) => p.$side === "left" && "left: calc(100% + 8px); top: 2px; padding: 2px 0 3px; &::after { left: -4px; top: 6px; width: 4px; height: 8px; clip-path: polygon(0 50%, 100% 0, 100% 100%); }"}
`;
const LayersButton = styled.button`
  position: absolute;
  right: 22px;
  bottom: 22px;
`;

const LAYERS = 124;

const LayerSlider = () => {
  const [top, setTop] = useState(85);
  const [low, setLow] = useState(1);
  const pos = (v: number) => (v - 1) / (LAYERS - 1);
  const at = (v: number) => `calc(12px + (100% - 24px) * ${pos(v)})`;
  const pct = pos(top) * 100;
  return (
    <Rail $vertical>
      <Fill style={{ background: `linear-gradient(to top, ${GREEN} ${pct}%, #cfcfcf ${pct}%)` }} />
      <Range $vertical $cross type="range" aria-label="Top layer" min={1} max={LAYERS} value={top} onChange={(e) => setTop(+e.target.value)} />
      <Range $vertical type="range" aria-label="Bottom layer" min={1} max={LAYERS} value={low} onChange={(e) => setLow(+e.target.value)} />
      <Tag $side="up" style={{ bottom: at(top) }}>{`${top}\n${(top / 10).toFixed(2)}`}</Tag>
      <Tag $side="down" style={{ top: `calc(100% - 12px - (100% - 24px) * ${pos(low)})` }}>{`${low}\n${(low / 10).toFixed(2)}`}</Tag>
    </Rail>
  );
};

const MoveSlider = () => {
  const [move, setMove] = useState(1429);
  return (
    <Rail>
      <Fill />
      <Range type="range" aria-label="Move" min={1} max={1429} value={move} onChange={(e) => setMove(+e.target.value)} />
      <Tag $side="left">{move}</Tag>
    </Rail>
  );
};

/* ---------- app ---------- */

export default function App() {
  return (
    <Page>
      <GlobalStyle />
      <TitleBar>
        <TitleTools>
          <FileButton><MenuIcon />File</FileButton>
          <ToolButton $gap={19} aria-label="More"><Chevron /></ToolButton>
          <Divider />
          <ToolButton $gap={22} aria-label="Save"><SaveWhite /></ToolButton>
          <ToolButton $dim $gap={23} aria-label="Undo"><Undo /></ToolButton>
          <ToolButton $dim aria-label="Redo"><Undo flip /></ToolButton>
        </TitleTools>
        <WindowTitle>Untitled</WindowTitle>
        <WindowButtons>
          <ToolButton aria-label="Minimize"><Minimize /></ToolButton>
          <ToolButton aria-label="Restore"><Restore /></ToolButton>
          <ToolButton aria-label="Close"><Close /></ToolButton>
        </WindowButtons>
      </TitleBar>
      <NavBar>
        <HomeButton aria-label="Home"><Home /></HomeButton>
        <NavTab><Cube />Prepare</NavTab>
        <NavTab $active><Layers />Preview</NavTab>
        <NavTab><DeviceIcon />Device</NavTab>
        <NavTab><ListIcon />Project</NavTab>
        <NavTab><DeviceIcon />Calibration</NavTab>
        <Actions>
          <Action $w={125}><UploadIcon />Upload</Action>
          <Split>
            <Action $part="menu" $w={24} aria-label="Slice options"><Chevron s={10} /></Action>
            <Action $part="main" $w={109} disabled>Slice plate</Action>
          </Split>
          <Split>
            <Action $part="menu" $w={24} aria-label="Print options"><Chevron s={10} /></Action>
            <Action $part="main" $w={111}>Print plate</Action>
          </Split>
        </Actions>
      </NavBar>
      <Body>
        <Side />
        <Viewport>
          <Scene />
          <PlateList>
            <Plate aria-label="Plate 1">
              <PlateThumb viewBox="0 0 105 105">
                <ellipse cx="51" cy="60" rx="29" ry="20" fill="#0a7a22" />
                <ellipse cx="51" cy="59" rx="29" ry="20" fill="#0fa535" />
                <path d="M33 40L31.500 58Q34 69 51 69T70.500 58L69 40z" fill="#047019" />
                <ellipse cx="51" cy="41" rx="18.500" ry="13" fill="#11ad3a" />
                <path d="M40 46l20-10" stroke="#0c9a31" strokeDasharray="4 2" />
              </PlateThumb>
              <PlateNo>1</PlateNo>
            </Plate>
          </PlateList>
          <LegendPanel />
          <LayerSlider />
          <MoveSlider />
          <LayersButton aria-label="Layer view">
            <Svg $s={24} viewBox="0 0 24 24" strokeWidth="1">
              <g fill="#1fbf50" stroke="#eafbef">
                <path d="M12 10.500l11 5-11 6-11-6z" /><path d="M12 6.500l11 5-11 6-11-6z" /><path d="M12 2l11 5.500-11 6-11-6z" />
              </g>
            </Svg>
          </LayersButton>
        </Viewport>
      </Body>
    </Page>
  );
}
